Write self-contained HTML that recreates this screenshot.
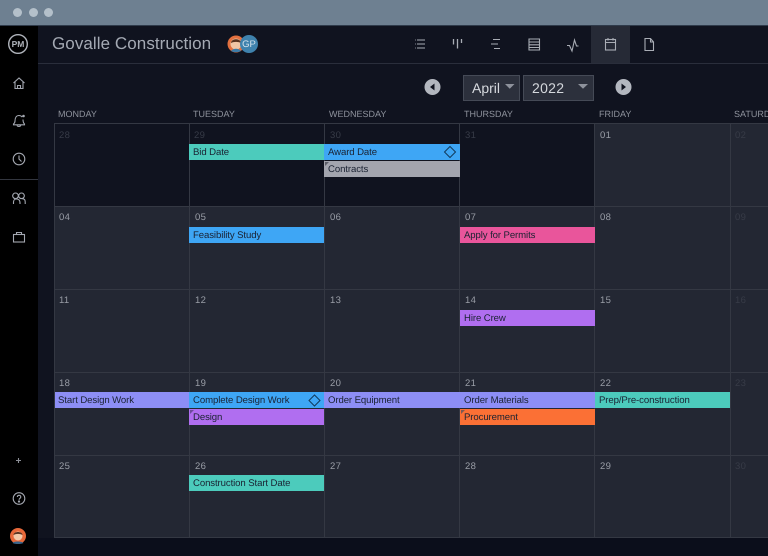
<!DOCTYPE html>
<html><head><meta charset="utf-8">
<style>
html,body{margin:0;padding:0;background:#0f1220}
body{width:768px;height:556px;overflow:hidden;position:relative;font-family:"Liberation Sans",sans-serif;text-rendering:geometricPrecision}
#w{position:absolute;left:0;top:0;width:768px;height:556px;overflow:hidden;filter:blur(.35px)}
.a{position:absolute}
.top{left:0;top:0;width:768px;height:26px;background:#6e8091}
.dot{top:8px;width:9px;height:9px;border-radius:50%;background:#b4c0ca}
.side{left:0;top:26px;width:38px;height:530px;background:#000}
.main{left:38px;top:26px;width:730px;height:530px;background:#10131f}
.hl{background:#2a2e3b;height:1px}
.title{left:52px;top:34px;font-size:17px;letter-spacing:.07px;color:#a4a9b3;line-height:20px;white-space:nowrap}
.day{top:108px;font-size:9px;color:#8e929c;line-height:12px;white-space:nowrap}
.cell{position:absolute;box-sizing:border-box;border-right:1px solid #343843;border-bottom:1px solid #343843}
.d{background:#10131f}
.l{background:#232733}
.n{position:absolute;font-size:9.5px;line-height:11px;color:#9a9ea7;letter-spacing:.3px}
.n.f{color:#373b47}
.bar{position:absolute;height:16px;line-height:18px;font-size:9.6px;color:#1a2232;padding-left:4px;box-sizing:border-box;white-space:nowrap;letter-spacing:-.1px}
.sel{top:75px;height:26px;box-sizing:border-box;background:#2c303c;border:1px solid #454a56;color:#d5d8dd;font-size:14px;line-height:24px}
svg{position:absolute;overflow:visible}
.ic{fill:none;stroke:#a3a7b0;stroke-width:1.1}
.tb{fill:none;stroke:#a9adb5;stroke-width:1.1}
</style></head><body><div id="w">
<div class="a top"></div>
<div class="a dot" style="left:13px"></div>
<div class="a dot" style="left:29px"></div>
<div class="a dot" style="left:44px"></div>
<div class="a main"></div>
<div class="a" style="left:38px;top:538px;width:730px;height:18px;background:#0b0e1b"></div>
<div class="a side"></div>
<div class="a" style="left:0;top:25px;width:768px;height:1px;background:#2f3b4b"></div>
<div class="a hl" style="left:38px;top:63px;width:730px"></div>
<div class="a hl" style="left:0;top:179px;width:38px;background:#33363f"></div>
<div class="a" style="left:591px;top:26px;width:39px;height:37px;background:#262a36"></div>

<!-- sidebar icons -->
<svg style="left:0;top:26px" width="38" height="530" class="ic">
<circle cx="18" cy="18" r="9.300" stroke-width="1.400" stroke="#b0b4bb"/>
<path d="M13.500 57l5.500-5 5.500 5M15 56v6.500h8V56M17.500 62.500v-3h3v3"/>
<path d="M15 95c0-3 1.200-5.500 4-5.500 1.500 0 2.500.6 3.200 1.600M23 93.500c0 2 .3 3.500 1.500 4.500v.8H13.500V98c1.200-1 1.500-2 1.500-3M17 99.500c.4 1.200 3.300 1.200 3.800 0"/>
<circle cx="23.500" cy="90" r="1.300" fill="#a3a7b0" stroke="none"/>
<circle cx="19" cy="133" r="5.800"/><path d="M19 129.500V133l2.500 2.500"/>
<path d="M15.500 167a2.800 2.800 0 1 0 .01 0M21.500 167a2.800 2.800 0 1 0 .01 0M13.500 178v-2c0-2 1.500-3 3-3s3.500 .8 3.500 4V178M22 172.700c2 0 3.200 1 3.200 3V178"/>
<rect x="13.500" y="208.500" width="11" height="7.500"/><path d="M16.500 208.500v-2h5v2"/>
<path d="M16 434.500h5M18.500 432v5" stroke-width="1.100" stroke="#8d9098"/>
<circle cx="19" cy="472.500" r="5.800"/><path d="M17.300 471c.2-2.200 3.600-2.200 3.500 0 0 1.300-1.700 1.300-1.700 2.800"/><circle cx="19" cy="475.500" r=".6" fill="#a3a7b0"/>
<circle cx="18" cy="510" r="8" fill="#e8693a" stroke="none"/>
<path d="M12.500 517c1-2 9.500-2 11 0-2 1.300-9 1.300-11 0z" fill="#36648c" stroke="none"/>
<circle cx="18" cy="510" r="4.500" fill="#f2c9a9" stroke="none"/>
<path d="M13.500 509c0-4 9-4 9 0-3-1.500-6-1.500-9 0z" fill="#5a3320" stroke="none"/>
</svg>
<div class="a" style="left:9px;top:39px;width:18px;text-align:center;font-size:8.500px;font-weight:bold;color:#b0b4bb;line-height:10px">PM</div>

<div class="a title">Govalle Construction</div>

<!-- avatars -->
<svg style="left:226px;top:33px" width="36" height="22">
<circle cx="10" cy="11" r="8.500" fill="#e2703f"/>
<circle cx="10" cy="11" r="5.500" fill="#f1c6a5"/>
<path d="M5 10c0-5 10-5 10 0-3-1.500-7-1.500-10 0z" fill="#5a3320"/>
<path d="M5 18c2-3 8-3 10 0-3 1.500-7 1.500-10 0z" fill="#3c7ca8"/>
<circle cx="23" cy="11" r="9" fill="#3f82ad"/>
</svg>
<div class="a" style="left:240px;top:39px;width:18px;text-align:center;font-size:9.500px;line-height:12px;color:#d5e3ec">GP</div>

<!-- toolbar icons -->
<svg style="left:400px;top:26px" width="270" height="37" class="tb">
<path d="M17 14h8M17 18h8M17 22h8"/><path d="M15 14h1M15 18h1M15 22h1" stroke="#7e828b"/>
<path d="M53.500 13v5.500M57.500 13v9.500M61.500 13v4" stroke-width="1.300"/>
<path d="M93 13.500h7M91 18h7M94 22.500h6"/>
<path d="M129 13h10.500v11H129zM129 16h10.500M129 18.800h10.500M129 21.500h10.500"/>
<path d="M167 19.500l2.500 0 2.500 5.500 2.500-11 2 6h2"/>
<rect x="205.500" y="13.500" width="10" height="10.500"/><path d="M205.500 16.500h10M208 12v2.500M213 12v2.500"/>
<path d="M245 12.500h5.500l3 3.500v8.500H245zM250.500 12.500v3.500h3"/>
</svg>

<!-- month nav -->
<svg style="left:424px;top:78px" width="18" height="18"><circle cx="8.500" cy="9" r="8" fill="#b3b7bf"/><path d="M10.500 5.500v7l-4.500-3.500z" fill="#10131f"/></svg>
<svg style="left:615px;top:78px" width="18" height="18"><circle cx="8.500" cy="9" r="8" fill="#b3b7bf"/><path d="M6.500 5.500v7l4.500-3.500z" fill="#10131f"/></svg>
<div class="a sel" style="left:463px;width:57px;padding-left:8px">April</div>
<div class="a sel" style="left:523px;width:71px;padding-left:8px;letter-spacing:.3px">2022</div>
<svg style="left:505px;top:84px" width="12" height="7"><path d="M0 0h9.500l-4.750 4.800z" fill="#8e929c"/></svg>
<svg style="left:578px;top:84px" width="12" height="7"><path d="M0 0h10l-5 4.800z" fill="#8e929c"/></svg>

<div class="a day" style="left:58px">MONDAY</div>
<div class="a day" style="left:193px">TUESDAY</div>
<div class="a day" style="left:329px">WEDNESDAY</div>
<div class="a day" style="left:464px">THURSDAY</div>
<div class="a day" style="left:599px">FRIDAY</div>
<div class="a day" style="left:734px">SATURDAY</div>

<!-- grid -->
<div class="a" style="left:54px;top:123px;width:714px;height:1px;background:#343843"></div>
<div class="a" style="left:54px;top:123px;width:1px;height:415px;background:#343843;z-index:2"></div>

<div class="cell d" style="left:54px;top:124px;width:136px;height:83px"></div>
<div class="cell d" style="left:190px;top:124px;width:135px;height:83px"></div>
<div class="cell d" style="left:325px;top:124px;width:135px;height:83px"></div>
<div class="cell d" style="left:460px;top:124px;width:135px;height:83px"></div>
<div class="cell l" style="left:595px;top:124px;width:136px;height:83px"></div>
<div class="cell l" style="left:731px;top:124px;width:37px;height:83px;border-right:0"></div>

<div class="cell l" style="left:54px;top:207px;width:136px;height:83px"></div>
<div class="cell l" style="left:190px;top:207px;width:135px;height:83px"></div>
<div class="cell l" style="left:325px;top:207px;width:135px;height:83px"></div>
<div class="cell l" style="left:460px;top:207px;width:135px;height:83px"></div>
<div class="cell l" style="left:595px;top:207px;width:136px;height:83px"></div>
<div class="cell l" style="left:731px;top:207px;width:37px;height:83px;border-right:0"></div>

<div class="cell l" style="left:54px;top:290px;width:136px;height:83px"></div>
<div class="cell l" style="left:190px;top:290px;width:135px;height:83px"></div>
<div class="cell l" style="left:325px;top:290px;width:135px;height:83px"></div>
<div class="cell l" style="left:460px;top:290px;width:135px;height:83px"></div>
<div class="cell l" style="left:595px;top:290px;width:136px;height:83px"></div>
<div class="cell l" style="left:731px;top:290px;width:37px;height:83px;border-right:0"></div>

<div class="cell l" style="left:54px;top:373px;width:136px;height:83px"></div>
<div class="cell l" style="left:190px;top:373px;width:135px;height:83px"></div>
<div class="cell l" style="left:325px;top:373px;width:135px;height:83px"></div>
<div class="cell l" style="left:460px;top:373px;width:135px;height:83px"></div>
<div class="cell l" style="left:595px;top:373px;width:136px;height:83px"></div>
<div class="cell l" style="left:731px;top:373px;width:37px;height:83px;border-right:0"></div>

<div class="cell l" style="left:54px;top:456px;width:136px;height:82px"></div>
<div class="cell l" style="left:190px;top:456px;width:135px;height:82px"></div>
<div class="cell l" style="left:325px;top:456px;width:135px;height:82px"></div>
<div class="cell l" style="left:460px;top:456px;width:135px;height:82px"></div>
<div class="cell l" style="left:595px;top:456px;width:136px;height:82px"></div>
<div class="cell l" style="left:731px;top:456px;width:37px;height:82px;border-right:0"></div>

<!-- numbers -->
<div class="n f" style="left:59px;top:130px">28</div><div class="n f" style="left:194px;top:130px">29</div><div class="n f" style="left:330px;top:130px">30</div><div class="n f" style="left:465px;top:130px">31</div><div class="n" style="left:600px;top:130px">01</div><div class="n f" style="left:735px;top:130px">02</div>
<div class="n" style="left:59px;top:212px">04</div><div class="n" style="left:195px;top:212px">05</div><div class="n" style="left:330px;top:212px">06</div><div class="n" style="left:465px;top:212px">07</div><div class="n" style="left:600px;top:212px">08</div><div class="n f" style="left:735px;top:212px">09</div>
<div class="n" style="left:59px;top:295px">11</div><div class="n" style="left:195px;top:295px">12</div><div class="n" style="left:330px;top:295px">13</div><div class="n" style="left:465px;top:295px">14</div><div class="n" style="left:600px;top:295px">15</div><div class="n f" style="left:735px;top:295px">16</div>
<div class="n" style="left:59px;top:378px">18</div><div class="n" style="left:195px;top:378px">19</div><div class="n" style="left:330px;top:378px">20</div><div class="n" style="left:465px;top:378px">21</div><div class="n" style="left:600px;top:378px">22</div><div class="n f" style="left:735px;top:378px">23</div>
<div class="n" style="left:59px;top:461px">25</div><div class="n" style="left:195px;top:461px">26</div><div class="n" style="left:330px;top:461px">27</div><div class="n" style="left:465px;top:461px">28</div><div class="n" style="left:600px;top:461px">29</div><div class="n f" style="left:735px;top:461px">30</div>

<!-- bars -->
<div class="bar" style="left:189px;top:144px;width:135px;background:#4ccbbc">Bid Date</div>
<div class="bar" style="left:324px;top:144px;width:136px;background:#3ea6f5">Award Date</div>
<div class="bar" style="left:324px;top:161px;width:136px;background:#a3a5ae">Contracts</div>
<div class="bar" style="left:189px;top:227px;width:135px;background:#3ea6f5">Feasibility Study</div>
<div class="bar" style="left:460px;top:227px;width:135px;background:#e9559b">Apply for Permits</div>
<div class="bar" style="left:460px;top:310px;width:135px;background:#b06ef0">Hire Crew</div>
<div class="bar" style="left:54px;top:392px;width:135px;background:#8d8ef5">Start Design Work</div>
<div class="bar" style="left:189px;top:392px;width:135px;background:#3ea6f5">Complete Design Work</div>
<div class="bar" style="left:324px;top:392px;width:136px;background:#8d8ef5">Order Equipment</div>
<div class="bar" style="left:460px;top:392px;width:135px;background:#8d8ef5">Order Materials</div>
<div class="bar" style="left:595px;top:392px;width:135px;background:#4ccbbc">Prep/Pre-construction</div>
<div class="bar" style="left:189px;top:409px;width:135px;background:#b06ef0">Design</div>
<div class="bar" style="left:460px;top:409px;width:135px;background:#fb7035">Procurement</div>
<div class="bar" style="left:189px;top:475px;width:135px;background:#4ccbbc">Construction Start Date</div>

<!-- diamonds and corner markers -->
<svg style="left:0;top:0;z-index:3" width="768" height="556">
<path d="M450 146.500l5.500 5.500-5.500 5.500-5.500-5.500z" fill="none" stroke="#123a5c" stroke-width="1"/>
<path d="M314.500 395l5.500 5.500-5.500 5.500-5.500-5.500z" fill="none" stroke="#123a5c" stroke-width="1"/>
<path d="M325 162h4l-4 4z" fill="#5c5e68"/>
<path d="M190 410h4l-4 4z" fill="#6d4a9c"/>
<path d="M461 410h4l-4 4z" fill="#7a5a55"/>
</svg>
</div></body></html>
